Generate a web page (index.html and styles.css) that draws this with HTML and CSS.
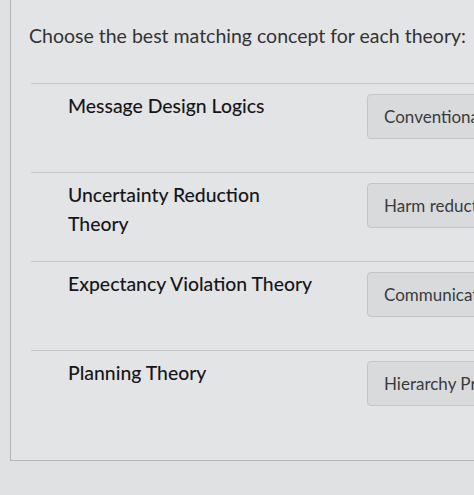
FILE: index.html
```html
<!DOCTYPE html>
<html>
<head>
<meta charset="utf-8">
<link rel="stylesheet" href="styles.css">
</head>
<body>
<div class="panel">
  <div class="title">Choose the best matching concept for each theory:</div>
  <div class="rows">
    <div class="row">
      <div class="label">Message Design Logics</div>
      <div class="select">Conventional</div>
    </div>
    <div class="row">
      <div class="label">Uncertainty Reduction Theory</div>
      <div class="select">Harm reduction</div>
    </div>
    <div class="row">
      <div class="label">Expectancy Violation Theory</div>
      <div class="select">Communication</div>
    </div>
    <div class="row last">
      <div class="label">Planning Theory</div>
      <div class="select">Hierarchy Principle</div>
    </div>
  </div>
</div>
</body>
</html>
```
FILE: styles.css
```css
html, body {
  margin: 0;
  padding: 0;
}
body {
  width: 474px;
  height: 495px;
  overflow: hidden;
  background: #e0e1e3;
  font-family: Lato, "Open Sans", sans-serif;
  color: #2b2b2d;
}
.panel {
  margin-left: 10px;
  width: 640px;
  border-left: 1px solid #b4b5b8;
  border-bottom: 1px solid #b4b5b8;
  padding-top: 23px;
  background: #e3e4e6;
}
.title {
  font-size: 19.5px;
  line-height: 25px;
  padding-left: 18px;
  margin-bottom: 35px;
  color: #333335;
}
.rows {
  margin-left: 20px;
}
.row {
  border-top: 1px solid #c5c6c9;
  height: 89px;
  padding-left: 37px;
  display: grid;
  grid-template-columns: 299px 240px;
  align-items: start;
  box-sizing: border-box;
}
.row.last {
  height: 110px;
}
.label {
  font-size: 19.4px;
  font-weight: 500;
  line-height: 29px;
  padding-top: 7px;
  width: 248px;
  color: #161618;
}
.select {
  margin-top: 10px;
  height: 45px;
  box-sizing: border-box;
  border: 1px solid #c4c5c8;
  border-radius: 4px;
  background: #d9dadc;
  padding-left: 16px;
  font-size: 17px;
  line-height: 43px;
  color: #3a3a3c;
  white-space: nowrap;
}
```
